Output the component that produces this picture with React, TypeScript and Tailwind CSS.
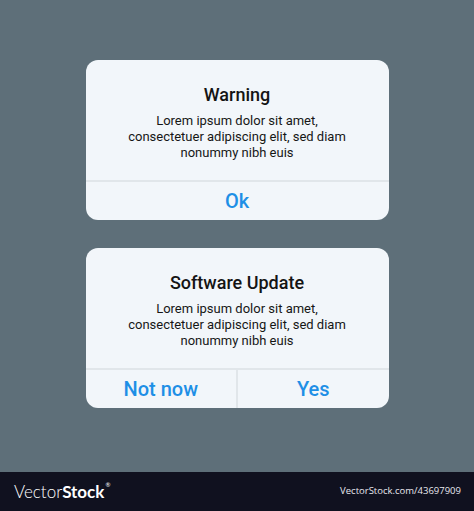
import React from "react";

interface DialogProps {
  title: string;
  actions: string[];
}

const BODY = [
  "Lorem ipsum dolor sit amet,",
  "consectetuer adipiscing elit, sed diam",
  "nonummy nibh euis",
];

function Dialog({ title, actions }: DialogProps) {
  return (
    <div className="w-[303px] h-[160px] bg-[#f2f6fa] rounded-[12px] overflow-hidden flex flex-col">
      <div className="flex-1 flex flex-col items-center pt-[23px]">
        <h2 className="text-[18px] leading-[24px] font-medium text-[#141414]">{title}</h2>
        <p className="mt-[6px] text-[13px] leading-[16px] text-[#161616] text-center">
          {BODY.map((line) => (
            <span key={line} className="block">{line}</span>
          ))}
        </p>
      </div>
      <div className="h-[40px] border-t-2 border-[#e1e6ea] flex">
        {actions.map((a, i) => (
          <button
            key={a}
            className={`flex-1 flex items-center justify-center text-[20px] font-medium text-[#1e8fe6] ${
              i > 0 ? "border-l-2 border-[#e1e6ea]" : ""
            }`}
          >
            {a}
          </button>
        ))}
      </div>
    </div>
  );
}

export default function App() {
  return (
    <div className="w-[474px] h-[511px] flex flex-col" style={{ fontFamily: "Roboto, 'Noto Sans', sans-serif" }}>
      <div className="h-[472px] bg-[#5e6f79] flex flex-col items-center pt-[60px] gap-[28px]">
        <Dialog title="Warning" actions={["Ok"]} />
        <Dialog title="Software Update" actions={["Not now", "Yes"]} />
      </div>
      <div className="flex-1 bg-[#10111f] flex items-center justify-between pl-[14px] pr-[13px]">
        <span className="text-white text-[17px] leading-none flex items-start" style={{ fontFamily: "Lato, 'Open Sans', sans-serif" }}>
          <span className="font-light">Vector</span>
          <span className="font-bold">Stock</span>
          <span className="text-[6px] ml-[1px] -mt-[1px]">®</span>
        </span>
        <span className="text-[#e8e8ee] text-[9.5px]" style={{ fontFamily: "'Open Sans', sans-serif" }}>
          VectorStock.com/43697909
        </span>
      </div>
    </div>
  );
}
